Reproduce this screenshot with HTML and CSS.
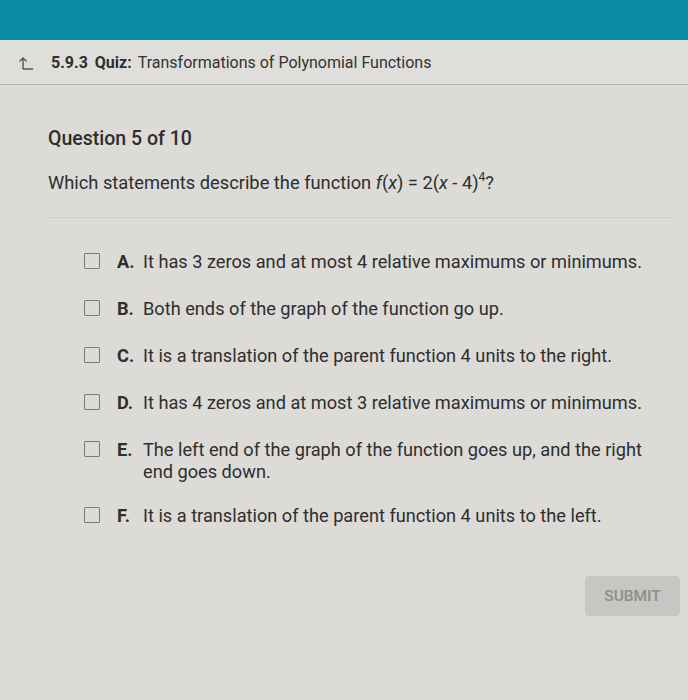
FILE: index.html
```html
<!DOCTYPE html>
<html>
<head>
<meta charset="utf-8">
<link rel="stylesheet" href="styles.css">
</head>
<body>
<div class="topbar"></div>
<header class="header">
  <svg class="back" width="16" height="14" viewBox="0 0 16 14"><path d="M5 13V2M1.5 5.5L5 2l3.5 3.5M5 13h10" fill="none" stroke="#555" stroke-width="1.4"/></svg>
  <span class="num">5.9.3</span>
  <span class="quiz">Quiz:</span>
  <span class="title">Transformations of Polynomial Functions</span>
</header>
<main class="content">
  <h1 class="qnum">Question 5 of 10</h1>
  <p class="prompt">Which statements describe the function <i>f</i>(<i>x</i>) = 2(<i>x</i> - 4)<sup>4</sup>?</p>
  <hr class="rule">
  <ul class="options">
    <li class="opt"><span class="box"></span><span class="letter">A.</span><span class="txt">It has 3 zeros and at most 4 relative maximums or minimums.</span></li>
    <li class="opt"><span class="box"></span><span class="letter">B.</span><span class="txt">Both ends of the graph of the function go up.</span></li>
    <li class="opt"><span class="box"></span><span class="letter">C.</span><span class="txt">It is a translation of the parent function 4 units to the right.</span></li>
    <li class="opt"><span class="box"></span><span class="letter">D.</span><span class="txt">It has 4 zeros and at most 3 relative maximums or minimums.</span></li>
    <li class="opt opt-wrap"><span class="box"></span><span class="letter">E.</span><span class="txt">The left end of the graph of the function goes up, and the right end goes down.</span></li>
    <li class="opt"><span class="box"></span><span class="letter">F.</span><span class="txt">It is a translation of the parent function 4 units to the left.</span></li>
  </ul>
  <div class="actions"><button class="submit">SUBMIT</button></div>
</main>
</body>
</html>
```
FILE: styles.css
```css
html, body { margin: 0; padding: 0; }
body {
  background: #dcdbd7;
  font-family: Roboto, "Liberation Sans", sans-serif;
  color: #2e2e2e;
  width: 688px;
  height: 700px;
  overflow: hidden;
}
.topbar {
  height: 40px;
  background: linear-gradient(#0d8aa3, #0a8ea8);
}
.header {
  height: 44px;
  display: flex;
  align-items: center;
  border-bottom: 1px solid #b4b4b0;
  padding-left: 18px;
  font-size: 16px;
  background: #dfdeda;
}
.back { margin-right: 17px; margin-top: 2px; }
.num { font-weight: 700; margin-right: 7px; }
.quiz { font-weight: 700; margin-right: 6px; }
.title { color: #333; }
.content { padding: 0 8px 0 48px; }
.qnum {
  margin: 42px 0 0;
  font-size: 19.5px;
  font-weight: 500;
  line-height: 24px;
}
.prompt {
  margin: 20px 0 0;
  font-size: 18.3px;
  line-height: 24px;
}
.prompt sup { font-size: 12px; line-height: 0; vertical-align: 8px; }
.rule {
  margin: 22px 8px 0 0;
  border: 0;
  border-top: 1px solid #cfcfcb;
}
.options {
  list-style: none;
  margin: 33px 0 0;
  padding: 0 0 0 36px;
}
.opt {
  display: flex;
  align-items: flex-start;
  font-size: 18.2px;
  line-height: 22px;
  margin-bottom: 25px;
}
.opt-wrap { margin-bottom: 22px; }
.box {
  flex: none;
  width: 14px;
  height: 14px;
  border: 1.5px solid #7a7a78;
  border-radius: 1px;
  margin-top: 2px;
  margin-right: 17px;
  box-sizing: content-box;
}
.letter { font-weight: 700; width: 26px; flex: none; }
.txt { max-width: 508px; }
.actions { display: flex; justify-content: flex-end; margin-top: 49px; }
.submit {
  width: 95px;
  height: 40px;
  border: 0;
  border-radius: 4px;
  background: #c6c6c3;
  color: #8d8d8b;
  font-family: Roboto, "Liberation Sans", sans-serif;
  font-size: 15.5px;
  font-weight: 500;
}
```
